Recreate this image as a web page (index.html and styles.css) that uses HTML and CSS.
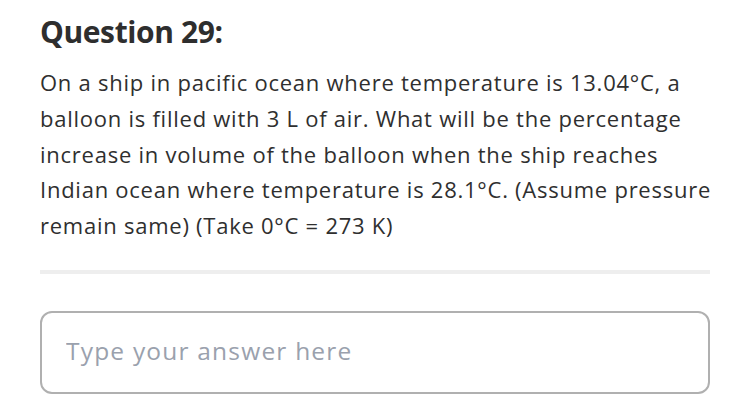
FILE: index.html
```html
<!DOCTYPE html>
<html lang="en">
<head>
<meta charset="utf-8">
<title>Question 29</title>
<link rel="stylesheet" href="styles.css">
</head>
<body>
<main class="question">
  <h2 class="question-title">Question 29:</h2>
  <p class="question-text">On a ship in pacific ocean where temperature is 13.04°C, a balloon is filled with 3 L of air. What will be the percentage increase in volume of the balloon when the ship reaches Indian ocean where temperature is 28.1°C. (Assume pressure remain same) (Take 0°C = 273 K)</p>
  <hr class="divider">
  <div class="answer">
    <input class="answer-input" type="text" placeholder="Type your answer here">
  </div>
</main>
</body>
</html>
```

FILE: styles.css
```css
html, body {
  margin: 0;
  padding: 0;
  background: #ffffff;
}

.question {
  width: 670px;
  padding: 0 40px;
  font-family: "Open Sans", "Liberation Sans", sans-serif;
  color: #333333;
}

.question-title {
  margin: 0;
  padding-top: 14px;
  font-size: 30px;
  line-height: 36px;
  font-weight: 700;
  letter-spacing: -0.4px;
  color: #2e2e2e;
}

.question-text {
  width: 684px;
  margin: 15px 0 0;
  font-size: 22px;
  line-height: 35.75px;
  letter-spacing: 0.75px;
  color: #2f2f2f;
}

.divider {
  margin: 26px 0 0;
  height: 4px;
  border: 0;
  background: #eeeeee;
}

.answer {
  margin-top: 37px;
}

.answer-input {
  box-sizing: border-box;
  display: block;
  width: 670px;
  height: 83px;
  margin: 0;
  padding: 0 24px 4px;
  border: 2px solid #b0b0b0;
  border-radius: 12px;
  font-family: "Open Sans", "Liberation Sans", sans-serif;
  font-size: 24.5px;
  letter-spacing: 1.2px;
  color: #333333;
  background: #ffffff;
  outline: none;
}

.answer-input::placeholder {
  color: #9aa1ad;
}
```
